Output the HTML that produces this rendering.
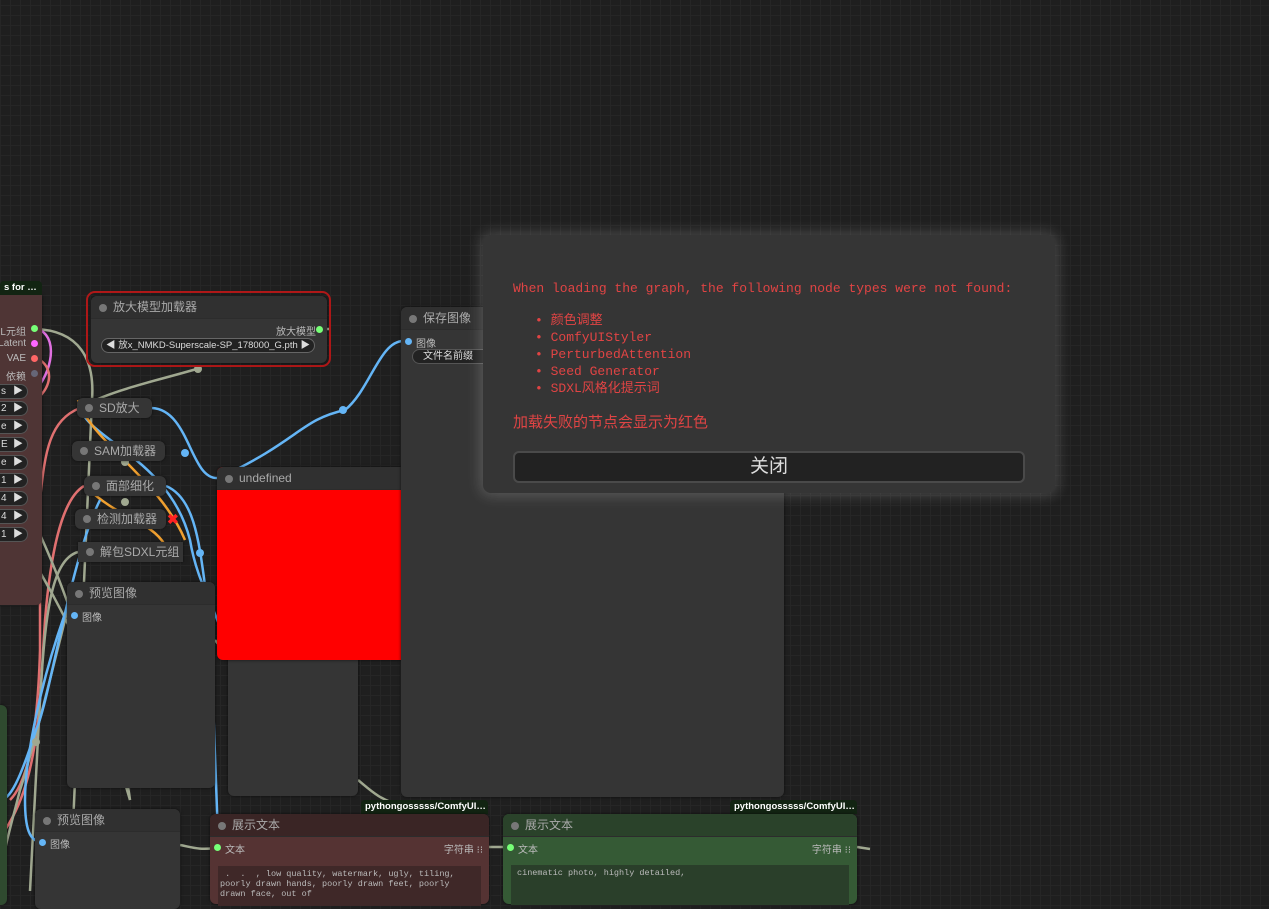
<!DOCTYPE html>
<html><head><meta charset="utf-8"><style>
*{box-sizing:border-box;margin:0;padding:0}
body{width:1269px;height:891px;overflow:hidden;position:relative;font-family:"Liberation Sans","Noto Sans CJK SC",sans-serif;
background-color:#1f1f1f;
background-image:linear-gradient(#262626 1px,transparent 1px),linear-gradient(90deg,#262626 1px,transparent 1px);
background-size:10px 10px;background-position:0 5px;white-space:nowrap}
.a{position:absolute}
.node{position:absolute;background:#353535;border-radius:6px;box-shadow:0 0 3px rgba(0,0,0,.6)}
.title{height:23px;background:#303030;border-radius:6px 6px 0 0;color:#aaa;font-size:12px;line-height:23px;padding-left:22px;position:relative;border-bottom:1px solid #2c2c2c}
.title:before{content:"";position:absolute;left:8px;top:8px;width:8px;height:8px;border-radius:50%;background:#777}
.pill{position:absolute;background:#353535;border-radius:6px;color:#aaa;font-size:12px;line-height:20px;padding-left:22px;height:20px;box-shadow:0 0 3px rgba(0,0,0,.6)}
.pill:before{content:"";position:absolute;left:8px;top:6px;width:8px;height:8px;border-radius:50%;background:#777}
.dot{position:absolute;width:7px;height:7px;border-radius:50%}
.lbl{position:absolute;font-size:10px;color:#bbb}
.w{position:absolute;height:15px;border-radius:8px;background:#222;border:1px solid #555;color:#ddd;font-size:10px;line-height:13px;overflow:hidden}
.badge{position:absolute;background:#122412;color:#fff;font-size:9.5px;font-weight:bold;height:14px;line-height:14px;padding-left:4px;border-radius:4px 4px 0 0;overflow:hidden;text-overflow:ellipsis}
.mono{font-family:"Liberation Mono","Noto Sans CJK SC",monospace}
</style></head><body>

<svg class="a" style="left:0;top:0" width="1269" height="891">
<g fill="none" stroke-width="2.5">
<path d="M34 329 C80 330 95 360 92 400 L85 560 L70 891" stroke="#a0a890"/>
<path d="M200 368 C160 380 110 390 80 408" stroke="#a0a890"/>
<path d="M320 329 L330 329" stroke="#a0a890"/>
<path d="M152 408 C190 410 190 480 218 478" stroke="#64b5f6"/>
<path d="M219 478 C300 440 300 420 345 410 C370 390 380 340 404 341" stroke="#64b5f6"/>
<path d="M80 408 C90 440 170 460 190 540 C200 600 230 620 235 700" stroke="#64b5f6"/>
<path d="M78 400 C90 440 160 480 185 540" stroke="#f0a030"/>
<path d="M85 486 C120 520 150 520 165 545" stroke="#f0a030"/>
<path d="M166 486 C200 500 200 560 210 620 L220 891" stroke="#64b5f6"/>
<path d="M40 330 C60 340 50 380 30 395" stroke="#e070e0"/>
<path d="M40 360 C55 370 50 390 35 400" stroke="#e07070"/>
<path d="M80 408 C50 420 45 450 40 500 L40 650 C38 720 30 780 10 800" stroke="#e07070"/>
<path d="M84 486 C60 500 50 560 45 620 L40 700 C35 760 25 800 5 830" stroke="#e07070"/>
<path d="M78 552 C50 560 45 620 40 700 L30 891" stroke="#a0a890"/>
<path d="M0 470 C50 520 100 700 130 800" stroke="#a0a890"/>
<path d="M20 540 C60 600 120 720 130 800" stroke="#a0a890"/>
<path d="M70 600 C50 680 30 760 20 790 C10 830 0 860 0 891" stroke="#a0a890"/>
<path d="M100 500 C70 560 50 700 36 730 C20 780 10 800 0 800" stroke="#64b5f6"/>
<path d="M70 600 C40 680 25 760 25 800 C25 830 30 840 40 842" stroke="#64b5f6"/>
<path d="M215 640 C230 660 250 680 260 700" stroke="#a0a890"/>
<path d="M358 780 C370 790 380 800 400 805" stroke="#a0a890"/>
<path d="M180 845 C195 848 200 850 215 848" stroke="#a0a890"/>
<path d="M489 847 L508 847" stroke="#a0a890"/>
<path d="M857 847 L870 849" stroke="#a0a890"/>
</g>
<g fill="#64b5f6"><circle cx="343" cy="410" r="4"/><circle cx="185" cy="453" r="4"/><circle cx="200" cy="553" r="4"/></g>
<g fill="#a0a890"><circle cx="198" cy="369" r="4"/><circle cx="125" cy="462" r="4"/><circle cx="125" cy="502" r="4"/><circle cx="36" cy="742" r="4"/></g>
</svg>

<div class="node" style="left:-10px;top:295px;width:52px;height:310px;background:#4f3535;border-radius:0 0 6px 0"></div>
<div class="badge" style="left:0;top:281px;width:42px;">s for Co..</div>
<div class="lbl" style="right:1243px;top:323px">XL元组</div><div class="dot" style="left:31px;top:325px;background:#7f7"></div>
<div class="lbl" style="right:1243px;top:338px">Latent</div><div class="dot" style="left:31px;top:340px;background:#f6f"></div>
<div class="lbl" style="right:1243px;top:353px">VAE</div><div class="dot" style="left:31px;top:355px;background:#f66"></div>
<div class="lbl" style="right:1243px;top:368px">依赖</div><div class="dot" style="left:31px;top:370px;background:#667"></div>
<div class="w" style="left:-10px;top:384px;width:38px;padding-left:10px">s<span style="float:right;margin-right:4px">▶</span></div>
<div class="w" style="left:-10px;top:401px;width:38px;padding-left:10px">2<span style="float:right;margin-right:4px">▶</span></div>
<div class="w" style="left:-10px;top:419px;width:38px;padding-left:10px">e<span style="float:right;margin-right:4px">▶</span></div>
<div class="w" style="left:-10px;top:437px;width:38px;padding-left:10px">E<span style="float:right;margin-right:4px">▶</span></div>
<div class="w" style="left:-10px;top:455px;width:38px;padding-left:10px">e<span style="float:right;margin-right:4px">▶</span></div>
<div class="w" style="left:-10px;top:473px;width:38px;padding-left:10px">1<span style="float:right;margin-right:4px">▶</span></div>
<div class="w" style="left:-10px;top:491px;width:38px;padding-left:10px">4<span style="float:right;margin-right:4px">▶</span></div>
<div class="w" style="left:-10px;top:509px;width:38px;padding-left:10px">4<span style="float:right;margin-right:4px">▶</span></div>
<div class="w" style="left:-10px;top:527px;width:38px;padding-left:10px">1<span style="float:right;margin-right:4px">▶</span></div>

<div class="a" style="left:86px;top:291px;width:245px;height:76px;border:2px solid #b01818;border-radius:9px"></div>
<div class="node" style="left:91px;top:296px;width:236px;height:67px">
<div class="title">放大模型加载器</div>
<div class="lbl" style="left:185px;top:27px">放大模型</div><div class="dot" style="left:225px;top:30px;background:#7f7"></div>
<div class="w" style="left:10px;top:42px;width:214px;border-color:#666;font-size:9.5px">
<span style="position:absolute;left:4px">◀</span>
<span style="position:absolute;left:16px;right:16px;text-align:center">放x_NMKD-Superscale-SP_178000_G.pth</span>
<span style="position:absolute;right:4px">▶</span></div>
</div>

<div class="pill" style="left:77px;top:398px;width:75px">SD放大</div>
<div class="pill" style="left:72px;top:441px;width:93px">SAM加载器</div>
<div class="pill" style="left:84px;top:476px;width:82px">面部细化</div>
<div class="pill" style="left:75px;top:509px;width:91px">检测加载器</div>
<div class="pill" style="left:78px;top:542px;width:105px;border-radius:0">解包SDXL元组</div>
<div class="a" style="left:167px;top:511px;color:#f22;font-size:14px;font-weight:bold">✖</div>

<div class="node" style="left:228px;top:480px;width:130px;height:316px"></div>
<div class="node" style="left:217px;top:467px;width:190px;height:193px;background:#f00;border-radius:6px">
<div class="title" style="border-radius:6px 6px 0 0">undefined</div></div>

<div class="node" style="left:401px;top:307px;width:383px;height:490px">
<div class="title">保存图像</div>
<div class="dot" style="left:4px;top:31px;background:#64b5f6"></div><div class="lbl" style="left:15px;top:28px">图像</div>
<div class="w" style="left:11px;top:42px;width:160px;padding-left:10px">文件名前缀</div>
</div>

<div class="node" style="left:67px;top:582px;width:148px;height:206px">
<div class="title">预览图像</div>
<div class="dot" style="left:4px;top:30px;background:#64b5f6"></div><div class="lbl" style="left:15px;top:27px">图像</div></div>
<div class="node" style="left:35px;top:809px;width:145px;height:100px">
<div class="title">预览图像</div>
<div class="dot" style="left:4px;top:30px;background:#64b5f6"></div><div class="lbl" style="left:15px;top:27px">图像</div></div>

<div class="node" style="left:-10px;top:705px;width:17px;height:200px;background:#2f4a2f"></div>

<div class="badge" style="left:361px;top:800px;width:127px">pythongosssss/ComfyUI-C..</div>
<div class="node" style="left:210px;top:814px;width:279px;height:90px;background:#553333">
<div class="title" style="background:#3a2525">展示文本</div>
<div class="dot" style="left:4px;top:30px;background:#7f7"></div><div class="lbl" style="left:15px;top:27px">文本</div>
<div class="lbl" style="right:6px;top:27px">字符串 ⁝⁝</div>
<div class="a mono" style="left:8px;top:52px;width:263px;height:40px;background:#3f2828;color:#bbb;font-size:8.5px;line-height:10px;padding:3px 2px;white-space:normal">&nbsp;.&nbsp;&nbsp;.&nbsp;&nbsp;, low quality, watermark, ugly, tiling, poorly drawn hands, poorly drawn feet, poorly drawn face, out of</div>
</div>

<div class="badge" style="left:730px;top:800px;width:127px">pythongosssss/ComfyUI-C..</div>
<div class="node" style="left:503px;top:814px;width:354px;height:90px;background:#355a35">
<div class="title" style="background:#2a422a">展示文本</div>
<div class="dot" style="left:4px;top:30px;background:#7f7"></div><div class="lbl" style="left:15px;top:27px">文本</div>
<div class="lbl" style="right:6px;top:27px">字符串 ⁝⁝</div>
<div class="a mono" style="left:8px;top:51px;width:338px;height:40px;background:#2a3f2a;color:#bbb;font-size:8.5px;line-height:10px;padding:3px 6px">cinematic photo, highly detailed,</div>
</div>

<div class="a" style="left:483px;top:235px;width:572px;height:258px;background:#353535;border-radius:8px;box-shadow:0 0 14px 3px rgba(255,255,255,.18)">
<div class="mono" style="position:absolute;left:30px;top:46px;color:#e04444;font-size:13px">When loading the graph, the following node types were not found:</div>
<div class="mono" style="position:absolute;left:52px;top:77px;color:#e04444;font-size:13px;line-height:17px">
<div>•&nbsp;颜色调整</div><div>•&nbsp;ComfyUIStyler</div><div>•&nbsp;PerturbedAttention</div><div>•&nbsp;Seed Generator</div><div>•&nbsp;SDXL风格化提示词</div></div>
<div class="mono" style="position:absolute;left:30px;top:176px;color:#e04444;font-size:15px">加载失败的节点会显示为红色</div>
<div style="position:absolute;left:30px;top:216px;width:512px;height:32px;background:#222;border:2px solid #4a4a4a;border-radius:6px;color:#ddd;font-size:19px;text-align:center;line-height:28px">关闭</div>
</div>
</body></html>
